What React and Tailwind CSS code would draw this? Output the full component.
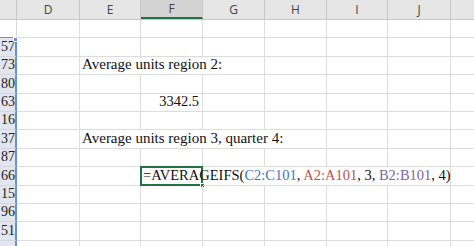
import React from "react";

const COLS = [
  { key: "sel", w: "w-[17px]", label: "" },
  { key: "D", w: "w-[63px]", label: "D" },
  { key: "E", w: "w-[61px]", label: "E" },
  { key: "F", w: "w-[62px]", label: "F" },
  { key: "G", w: "w-[62px]", label: "G" },
  { key: "H", w: "w-[62px]", label: "H" },
  { key: "I", w: "w-[61px]", label: "I" },
  { key: "J", w: "w-[63px]", label: "J" },
];

const serif = { fontFamily: '"Liberation Serif", "DejaVu Serif", serif' };

const Formula = () => (
  <span>
    =AVERAGEIFS(
    <span className="text-[#4472c4]">C2:C101</span>,{" "}
    <span className="text-[#c0504d]">A2:A101</span>, 3,{" "}
    <span className="text-[#8064a2]">B2:B101</span>, 4)
  </span>
);

const rows = [
  { left: null },
  { left: "57" },
  { left: "73", E: "Average units region 2:", hide: ["E", "F"], big: true },
  { left: "80" },
  { left: "63", F: "3342.5", right: true },
  { left: "16" },
  { left: "37", E: "Average units region 3, quarter 4:", hide: ["E", "F", "G"], big: true },
  { left: "87" },
  { left: "66", F: <Formula />, active: true, hide: ["G", "H", "I"] },
  { left: "15" },
  { left: "96" },
  { left: "51" },
  { left: "" },
];

const Row = ({ row }) => {
  const hide = row.hide || [];
  return (
    <div className="flex h-[18.4px] shrink-0">
      {COLS.map((c) => {
        if (c.key === "sel") {
          const selected = row.left !== null;
          return (
            <div
              key={c.key}
              className={`${c.w} shrink-0 relative flex items-end justify-end overflow-hidden border-b ${
                selected
                  ? "bg-[#e2e7ef] border-r-2 border-r-[#6b8fd0] border-b-[#d4d8de]"
                  : "bg-white border-r border-r-[#d9d9d9] border-b-[#6b8fd0]"
              }`}
            >
              {selected && row.left && (
                <span className="text-[14px] leading-none pb-[2px] text-[#222]" style={serif}>
                  {row.left}
                </span>
              )}
            </div>
          );
        }
        const content = row[c.key];
        const isActive = row.active && c.key === "F";
        const noRight = hide.includes(c.key);
        return (
          <div
            key={c.key}
            className={`${c.w} shrink-0 relative flex items-end border-b border-b-[#dcdcdc] ${
              noRight ? "" : "border-r border-r-[#dcdcdc]"
            } ${content && row.right ? "justify-end pr-[3px]" : "pl-[2px]"}`}
          >
            {content && (
              <span
                className={`relative z-10 whitespace-nowrap leading-none pb-[2px] text-[#111] ${
                  row.big ? "text-[15px]" : "text-[14.5px]"
                }`}
                style={serif}
              >
                {content}
              </span>
            )}
            {isActive && (
              <div className="absolute -left-[1px] -top-[1px] -right-[1px] -bottom-[1px] border-2 border-[#217346] pointer-events-none">
                <div className="absolute -right-[4px] -bottom-[4px] w-[5px] h-[5px] bg-[#217346] border border-white" />
              </div>
            )}
          </div>
        );
      })}
      <div className="flex-1 border-b border-b-[#dcdcdc]" />
    </div>
  );
};

export default function App() {
  return (
    <div className="w-[474px] h-[246px] overflow-hidden bg-white flex flex-col">
      <div
        className="flex h-[20px] shrink-0 bg-[#e6e6e6] border-b border-b-[#c8c8c8]"
        style={{ fontFamily: '"Open Sans", "Noto Sans", sans-serif' }}
      >
        {COLS.map((c) => (
          <div
            key={c.key}
            className={`${c.w} shrink-0 flex items-center justify-center text-[12px] text-[#444] border-r border-r-[#c8c8c8] ${
              c.key === "F" ? "bg-[#d3d3d3] border-b-2 border-b-[#217346]" : ""
            }`}
          >
            {c.label}
          </div>
        ))}
        <div className="flex-1" />
      </div>
      <div className="relative flex flex-col">
        {rows.map((r, i) => (
          <Row key={i} row={r} />
        ))}
        <div className="absolute left-[13px] top-[17px] w-[5px] h-[5px] bg-[#6b8fd0] border border-white" />
      </div>
    </div>
  );
}
